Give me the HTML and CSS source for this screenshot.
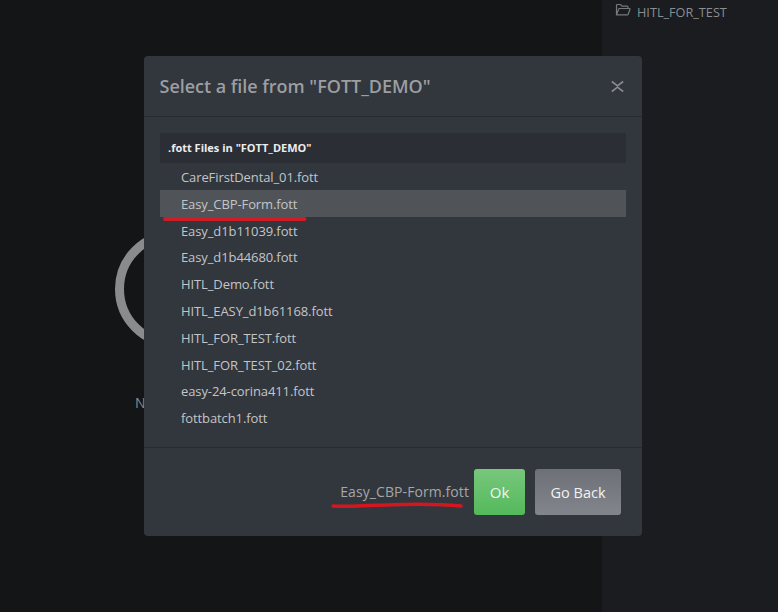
FILE: index.html
```html
<!DOCTYPE html>
<html lang="en">
<head>
<meta charset="utf-8">
<title>Select a file</title>
<link rel="stylesheet" href="styles.css">
</head>
<body>
<div class="page">
  <main class="main">
    <div class="ring"></div>
    <p class="empty">N</p>
  </main>
  <aside class="side">
    <div class="folder">
      <svg class="folder-icon" viewBox="0 0 16 14" width="16" height="14"><path d="M1.500 11.500V2.500a1 1 0 0 1 1-1h3l1.500 1.600h5a1 1 0 0 1 1 1V5.500M1.500 11.800 3.600 6.200a1 1 0 0 1 .9-.7H14.500a.6.6 0 0 1 .5.8l-1.800 5a1 1 0 0 1-.9.6H2a.5.5 0 0 1-.5-.1Z" fill="none" stroke="#77797c" stroke-width="1.200"/></svg>
      <span>HITL_FOR_TEST</span>
    </div>
  </aside>
</div>

<section class="modal">
  <header class="modal-head">
    <h2 class="modal-title">Select a file from "FOTT_DEMO"</h2>
    <svg class="close" viewBox="0 0 13 13" width="13" height="13"><path d="M.8 1.500 6.500 5.800 12.200 1.500M.8 11.500 6.500 7.200 12.200 11.500" stroke="#8a8d94" stroke-width="1.600" fill="none"/></svg>
  </header>
  <div class="modal-body">
    <div class="list-head">.fott Files in "FOTT_DEMO"</div>
    <ul class="files">
      <li class="file">CareFirstDental_01.fott</li>
      <li class="file selected">Easy_CBP-Form.fott</li>
      <li class="file">Easy_d1b11039.fott</li>
      <li class="file">Easy_d1b44680.fott</li>
      <li class="file">HITL_Demo.fott</li>
      <li class="file">HITL_EASY_d1b61168.fott</li>
      <li class="file">HITL_FOR_TEST.fott</li>
      <li class="file">HITL_FOR_TEST_02.fott</li>
      <li class="file">easy-24-corina411.fott</li>
      <li class="file">fottbatch1.fott</li>
    </ul>
  </div>
  <footer class="modal-foot">
    <span class="chosen">Easy_CBP-Form.fott</span>
    <button class="btn ok">Ok</button>
    <button class="btn back">Go Back</button>
  </footer>
</section>

<svg class="marks" viewBox="0 0 778 612" width="778" height="612">
  <path d="M165 219H304.500" stroke="#d01c25" stroke-width="4" stroke-linecap="round" fill="none"/>
  <path d="M333 506C350 507 366 505 385 505C410 504 440 504 461 506" stroke="#d5161f" stroke-width="3.500" stroke-linecap="round" fill="none"/>
</svg>
</body>
</html>
```

FILE: styles.css
```css
* { box-sizing: border-box; }
html, body { margin: 0; height: 100%; }
body {
  background: #141517;
  font-family: "Open Sans", "Noto Sans", "Liberation Sans", sans-serif;
  overflow: hidden;
}
.page { display: flex; height: 612px; }
.main {
  width: 602px;
  position: relative;
  background: #141517;
}
.ring {
  position: absolute;
  left: 115px;
  top: 230px;
  width: 118px;
  height: 118px;
  border: 9px solid #8a8b8c;
  border-radius: 50%;
}
.empty {
  position: absolute;
  left: 135px;
  top: 394px;
  margin: 0;
  font-size: 14px;
  line-height: 18px;
  color: #8a8b8c;
}
.side {
  flex: 1;
  background: #1a1c20;
  padding: 3px 0 0 13px;
}
.folder {
  display: flex;
  align-items: center;
  gap: 6px;
  height: 18px;
  font-size: 12.700px;
  color: #8b8d90;
}
.folder-icon { margin-top: -4px; }

.modal {
  position: absolute;
  left: 144px;
  top: 56px;
  width: 498px;
  height: 480px;
  background: #32363d;
  border-radius: 4px;
  display: flex;
  flex-direction: column;
}
.modal-head {
  height: 61px;
  border-bottom: 1px solid #282b31;
  padding: 0 18px 0 15.500px;
  display: flex;
  align-items: center;
  justify-content: space-between;
}
.modal-title {
  margin: 0;
  font-size: 18px;
  font-weight: 600;
  letter-spacing: -0.02px;
  color: #9c9ea1;
}
.modal-body {
  flex: 1;
  padding: 16px 16px 0;
}
.list-head {
  height: 30px;
  line-height: 30px;
  padding-left: 8px;
  background: #2b2e34;
  font-size: 11px;
  font-weight: 700;
  color: #eceded;
}
.files {
  list-style: none;
  margin: 0;
  padding: 0;
}
.file {
  height: 26.800px;
  line-height: 29.400px;
  padding-left: 21px;
  font-size: 13px;
  letter-spacing: -0.1px;
  color: #c3c5c7;
}
.selected { background: #505459; }
.modal-foot {
  height: 89px;
  border-top: 1px solid #282b31;
  padding: 21px 21px 0 0;
  display: flex;
  align-items: flex-start;
  justify-content: flex-end;
}
.chosen {
  font-size: 14px;
  line-height: 46px;
  letter-spacing: 0.08px;
  color: #a4a6a9;
  margin-right: 5px;
}
.btn {
  border: 0;
  height: 46px;
  border-radius: 3px;
  font: inherit;
  color: #f2f3f3;
}
.ok {
  width: 51px;
  font-size: 15px;
  background: linear-gradient(#78c77c, #54b95b);
}
.back {
  width: 86px;
  margin-left: 10px;
  font-size: 14.500px;
  background: linear-gradient(#6d7077, #82858b);
}
.marks {
  position: absolute;
  left: 0;
  top: 0;
  pointer-events: none;
}
```
